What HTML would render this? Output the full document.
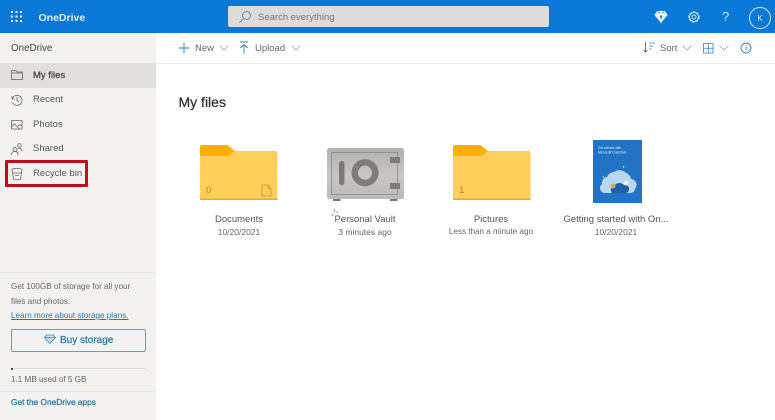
<!DOCTYPE html>
<html><head><meta charset="utf-8"><style>
html{background:#fff}
html,body{margin:0;padding:0;width:775px;height:420px;overflow:hidden;font-family:"Liberation Sans",sans-serif;color:#323130}
body{background:#fff;filter:blur(.3px)}
div,span,svg,a{position:absolute;white-space:nowrap}
.t{font-size:9.5px;line-height:12px;color:#555}
.c{text-align:center}
.ic{fill:none;stroke:#666;stroke-width:.8}
.chev{fill:none;stroke:#a6a6a6;stroke-width:.8}
.blue{fill:none;stroke:#2a7fc0;stroke-width:.9}
.s{font-size:8.15px;color:#666}
.semi{-webkit-text-stroke:.25px currentColor}
</style></head><body>
<div style="left:0;top:0;width:775px;height:33px;background:#0a78d6"></div>
<svg style="left:11px;top:11px" width="12" height="12"><g fill="#e8f3fc"><rect x="0" y="0" width="2" height="2"/><rect x="4.500" y="0" width="2" height="2"/><rect x="9" y="0" width="2" height="2"/><rect x="0" y="4.500" width="2" height="2"/><rect x="4.500" y="4.500" width="2" height="2"/><rect x="9" y="4.500" width="2" height="2"/><rect x="0" y="9" width="2" height="2"/><rect x="4.500" y="9" width="2" height="2"/><rect x="9" y="9" width="2" height="2"/></g></svg>
<div style="left:38.500px;top:11px;font-size:10.500px;line-height:14px;font-weight:bold;color:#dff0fc">OneDrive</div>
<div style="left:228px;top:6px;width:321px;height:21px;background:#dedcda;border-radius:2px"></div>
<svg style="left:238px;top:10px" width="14" height="14"><circle cx="8.500" cy="5.500" r="4" fill="none" stroke="#5a8ab0" stroke-width=".9"/><path d="M5.500 8.500L1.500 12.500" fill="none" stroke="#5a8ab0" stroke-width=".9"/></svg>
<div class="t" style="left:258px;top:11.500px;color:#777;font-size:9.500px">Search everything</div>
<svg style="left:654px;top:10px" width="14" height="14"><path d="M3.500 1.500h7l2.500 3.500-6 7-6-7zM1 5h12M5 5l2 7 2-7M3.500 1.500L5 5l2-3.500L9 5l1.500-3.500" fill="#cfe6f8" stroke="#fff" stroke-width="1"/></svg>
<svg style="left:687px;top:10px" width="14" height="14"><circle cx="7" cy="7" r="5" fill="none" stroke="#d5e9f8" stroke-width="1.300" stroke-dasharray="2.500 1.200"/><circle cx="7" cy="7" r="4.400" fill="none" stroke="#d5e9f8" stroke-width=".8"/><circle cx="7" cy="7" r="2" fill="none" stroke="#d5e9f8" stroke-width=".9"/></svg>
<div style="left:722px;top:9px;font-size:13px;line-height:15px;color:#d5e9f8">?</div>
<div style="left:749px;top:7px;width:20px;height:20px;border:1px solid #d5e9f8;border-radius:50%;text-align:center;font-size:8px;line-height:21px;color:#e8f3fc">K</div>

<div style="left:0;top:33px;width:156px;height:387px;background:#f3f2f1"></div>
<div class="t" style="left:11px;top:42.500px;font-size:9.800px;color:#444">OneDrive</div>
<div style="left:0;top:63px;width:156px;height:25px;background:#e1dfdd"></div>
<svg style="left:10px;top:68px" width="14" height="14"><path class="ic" d="M1.500 2.500h4l1.500 1.500h5.500v7.500h-11zM1.500 5h11"/></svg>
<div class="t semi" style="left:33px;top:70px;color:#444">My files</div>
<svg style="left:10px;top:93px" width="14" height="14"><path class="ic" d="M2 3v3h3M2.200 6a5 5 0 1 1 .3 3.500M7 4v3.500l2 1.500"/></svg>
<div class="t" style="left:33px;top:94px">Recent</div>
<svg style="left:10px;top:118px" width="14" height="14"><path class="ic" d="M1.500 2.500h10.500v8.500h-10.500zM1.500 9l3-3 5 5M8 8l2-1.500 2 2"/></svg>
<div class="t" style="left:33px;top:119px">Photos</div>
<svg style="left:10px;top:142px" width="14" height="14"><circle cx="5" cy="7.500" r="2" class="ic"/><circle cx="9.500" cy="3.500" r="1.800" class="ic"/><path class="ic" d="M1.500 13c0-3 1.500-3.500 3.500-3.500s3 1 3 3.500M8 6.500c2.500-.5 4 .5 4 3"/></svg>
<div class="t" style="left:33px;top:143px">Shared</div>
<svg style="left:10px;top:167px" width="14" height="14"><path class="ic" d="M2 2.500c2-1.500 8-1.500 10 0l-1.500 9.500c-1 1-6 1-7 0zM3 6h8M5 8.500h4"/></svg>
<div class="t" style="left:33px;top:168px">Recycle bin</div>
<div style="left:5px;top:160px;width:77px;height:21px;border:3px solid #bf0d19;border-radius:1px"></div>

<div style="left:0;top:272px;width:156px;height:1px;background:#eceae8"></div>
<div class="t s" style="left:11px;top:281px">Get 100GB of storage for all your</div>
<div class="t s" style="left:11px;top:296px">files and photos.</div>
<div class="t s" style="left:11px;top:310px;color:#2b78a8;text-decoration:underline">Learn more about storage plans.</div>
<div style="left:11px;top:329px;width:133px;height:21px;border:1px solid #6a9cbd;border-radius:2px"></div>
<svg style="left:44px;top:334px" width="12" height="11"><path d="M2.500 1h7l2 2.500-5.500 6-5.500-6zM.5 3.500h11" fill="#cfe3f1" stroke="#3f86b8" stroke-width=".8"/></svg>
<div class="t semi" style="left:60px;top:334.500px;font-size:10px;color:#2b78a8">Buy storage</div>
<div style="left:11px;top:368px;width:135px;height:1px;background:#dedcda"></div>
<div style="left:11px;top:367.500px;width:1.500px;height:2px;background:#444"></div>
<div class="t s" style="left:11px;top:374px">1.1 MB used of 5 GB</div>
<div style="left:0;top:391px;width:156px;height:1px;background:#eceae8"></div>
<div class="t s semi" style="left:11px;top:396px;font-size:8.300px;color:#2b78a8">Get the OneDrive apps</div>

<div style="left:156px;top:63px;width:619px;height:1px;background:#ededed"></div>
<svg style="left:178px;top:42px" width="12" height="12"><path d="M6 .5v11M.5 6h11" class="blue"/></svg>
<div class="t" style="left:195px;top:42.500px;color:#666">New</div>
<svg style="left:219px;top:45px" width="10" height="6"><path class="chev" d="M.5 .5L5 5 9.500 .5"/></svg>
<svg style="left:239px;top:41px" width="10" height="14"><path d="M1 1h8M5 13V3.500M1.500 7L5 3.500 8.500 7" class="blue"/></svg>
<div class="t" style="left:255px;top:42.500px;color:#666">Upload</div>
<svg style="left:291px;top:45px" width="10" height="6"><path class="chev" d="M.5 .5L5 5 9.500 .5"/></svg>
<svg style="left:643px;top:41px" width="13" height="13"><path d="M2.500 1v10M.5 9l2 2 2-2" fill="none" stroke="#555" stroke-width=".8"/><path d="M6 2h6M6 5h4M6 8h2.500" fill="none" stroke="#2a7fc0" stroke-width=".8"/></svg>
<div class="t" style="left:660px;top:42.500px;color:#666">Sort</div>
<svg style="left:682px;top:45px" width="10" height="6"><path class="chev" d="M.5 .5L5 5 9.500 .5"/></svg>
<svg style="left:703px;top:43px" width="11" height="11"><path d="M.5 .5h9.500v9.500H.5zM5.250 .5v9.500M.5 5.250h9.500" fill="none" stroke="#2a7fc0" stroke-width=".8"/></svg>
<svg style="left:719px;top:45px" width="10" height="6"><path class="chev" d="M.5 .5L5 5 9.500 .5"/></svg>
<svg style="left:740px;top:42px" width="12" height="12"><circle cx="6" cy="6" r="5" class="blue" stroke-width=".8"/><path d="M6 5v3.500M6 3v1" class="blue"/></svg>

<div class="semi" style="left:178.500px;top:93px;font-size:14px;line-height:18px;color:#323130">My files</div>

<svg style="left:199px;top:144px" width="80" height="58"><path d="M1 7H76.500Q78.500 7 78.500 9V54Q78.500 55.500 77 55.500H3Q1 55.500 1 54z" fill="#ffcf59"/><path d="M1 12V3Q1 1 3 1H27Q29 1 31 3L36 7 31 11Q30 12 28 12z" fill="#ffb000"/><rect x="1" y="54.500" width="77.500" height="1.500" fill="#e2a838"/><path d="M63 41h6l3 3.500v7.500h-9zM69 41v3.500h3" fill="none" stroke="#c8963a" stroke-width=".8"/></svg>
<div class="t" style="left:206px;top:184.500px;color:#b08a30;font-size:9.500px">0</div>
<div class="t c" style="left:179px;top:213.500px;width:120px;color:#555">Documents</div>
<div class="t c" style="left:179px;top:225.500px;width:120px;font-size:8.500px;color:#666">10/20/2021</div>

<svg style="left:326px;top:147px" width="78" height="55"><defs><linearGradient id="v" x1="0" y1="0" x2="0" y2="1"><stop offset="0" stop-color="#b4b2b0"/><stop offset=".55" stop-color="#c8c6c4"/><stop offset="1" stop-color="#bcbab8"/></linearGradient></defs><rect x="1" y="1" width="77" height="51" rx="2.500" fill="url(#v)"/><rect x="5.500" y="5.500" width="66" height="42" fill="none" stroke="#8e8c8a" stroke-width=".8"/><rect x="13" y="14" width="5.500" height="24" rx="2.700" fill="#7c7a78"/><circle cx="39" cy="25.700" r="10.300" fill="none" stroke="#7f7d7b" stroke-width="6.500"/><rect x="64" y="10" width="10" height="6" fill="#7f7d7b"/><rect x="64" y="36" width="10" height="6" fill="#7f7d7b"/><rect x="7" y="52" width="7.500" height="2" fill="#777"/><rect x="64" y="52" width="7.500" height="2" fill="#777"/></svg>
<svg style="left:330px;top:209px" width="8" height="9"><path d="M1 6h3M4.500 3L4 0M6.500 4l1.500-1.500" stroke="#2a8fd6" stroke-width=".8" fill="none"/></svg>
<div class="t c" style="left:305px;top:213.500px;width:120px;color:#555">Personal Vault</div>
<div class="t c" style="left:305px;top:225.500px;width:120px;font-size:8.500px;color:#666">3 minutes ago</div>

<svg style="left:452px;top:144px" width="80" height="58"><path d="M1 7H76.500Q78.500 7 78.500 9V54Q78.500 55.500 77 55.500H3Q1 55.500 1 54z" fill="#ffcf59"/><path d="M1 12V3Q1 1 3 1H27Q29 1 31 3L36 7 31 11Q30 12 28 12z" fill="#ffb000"/><rect x="1" y="54.500" width="77.500" height="1.500" fill="#e2a838"/></svg>
<div class="t" style="left:459px;top:184.500px;color:#b08a30;font-size:9.500px">1</div>
<div class="t c" style="left:431px;top:213.500px;width:120px;color:#555">Pictures</div>
<div class="t c" style="left:431px;top:225.500px;width:120px;font-size:8.100px;color:#666">Less than a minute ago</div>

<svg style="left:593px;top:140px" width="49" height="63"><rect width="49" height="63" fill="#2273c6"/><text x="5" y="9" font-size="3.300" fill="#e6f1fa" font-family="Liberation Sans, sans-serif">Get started with</text><text x="5" y="13.500" font-size="3.300" fill="#e6f1fa" font-family="Liberation Sans, sans-serif">Microsoft OneDrive</text><path d="M12 53a5 5 0 0 1-3-9 6 6 0 0 1 5-7 8 8 0 0 1 7-5 9 9 0 0 1 12 1 7 7 0 0 1 5 6 6 6 0 0 1 4 10 5 5 0 0 1-4 4z" fill="#b9d7ef"/><path d="M19 53a5 5 0 0 1 3-8 6 6 0 0 1 9 0 4 4 0 0 1 2 8z" fill="#1d5fa5"/><circle cx="20" cy="46" r="2.500" fill="#d9a76c"/><circle cx="33" cy="43" r="2.500" fill="#eef4fa"/><path d="M10 36l1 2M30 26l1 2" stroke="#dcebf7" stroke-width=".8"/></svg>
<div class="t c" style="left:556px;top:213.500px;width:120px;color:#555">Getting started with On...</div>
<div class="t c" style="left:556px;top:225.500px;width:120px;font-size:8.500px;color:#666">10/20/2021</div>
</body></html>
